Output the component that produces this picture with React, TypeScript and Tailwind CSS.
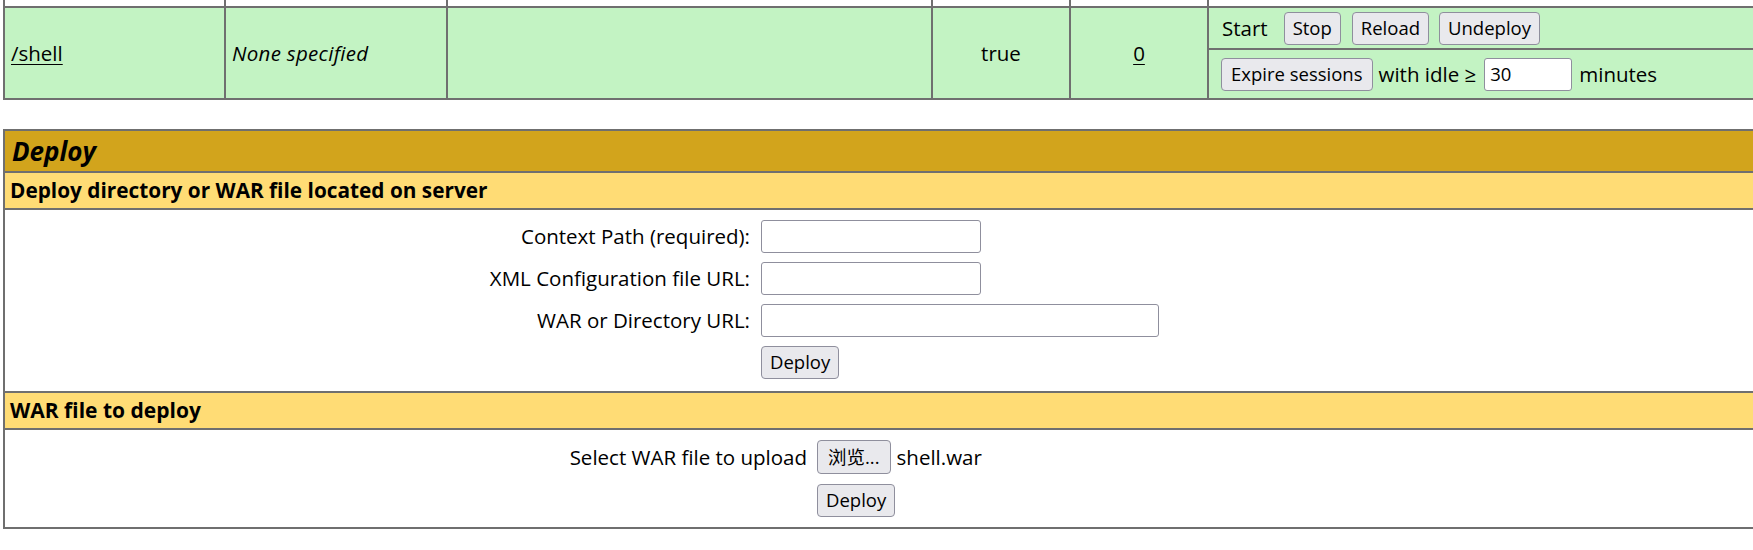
import React from "react";

const FONT = "font-['Open_Sans','Noto_Sans_CJK_SC',sans-serif]";
const cellB = "border-2 border-[#6f6f6f]";

function Btn({ children, className = "" }: { children: React.ReactNode; className?: string }) {
  return (
    <button
      type="button"
      className={`h-[33px] px-[8px] text-[18.5px] leading-none rounded-[4px] border border-[#8f8f9d] bg-[#e9e9ed] text-black ${className}`}
    >
      {children}
    </button>
  );
}

function Field({ w }: { w: string }) {
  return <div className={`h-[33px] ${w} rounded-[3px] border border-[#8f8f9d] bg-white`} />;
}

export default function App() {
  return (
    <div className={`w-[1753px] h-[550px] overflow-hidden bg-white text-black text-[20.5px] ${FONT}`}>
      <table className="ml-[3px] w-[1800px] table-fixed border-collapse">
        <colgroup>
          <col className="w-[221px]" />
          <col className="w-[222px]" />
          <col className="w-[485px]" />
          <col className="w-[138px]" />
          <col className="w-[138px]" />
          <col />
        </colgroup>
        <tbody>
          <tr className="h-[7px]">
            <td className={`${cellB} border-t-0 p-0`} />
            <td className={`${cellB} border-t-0 p-0`} />
            <td className={`${cellB} border-t-0 p-0`} />
            <td className={`${cellB} border-t-0 p-0`} />
            <td className={`${cellB} border-t-0 p-0`} />
            <td className={`${cellB} border-t-0 p-0`} />
          </tr>
          <tr className="bg-[#c3f3c3]">
            <td rowSpan={2} className={`${cellB} px-[6px] align-middle`}>
              <a className="underline underline-offset-[3px] decoration-1">/shell</a>
            </td>
            <td rowSpan={2} className={`${cellB} px-[6px] align-middle italic tracking-[0.3px]`}>
              None specified
            </td>
            <td rowSpan={2} className={`${cellB} align-middle`} />
            <td rowSpan={2} className={`${cellB} align-middle text-center`}>
              true
            </td>
            <td rowSpan={2} className={`${cellB} align-middle text-center`}>
              <a className="underline underline-offset-[3px] decoration-1">0</a>
            </td>
            <td className={`${cellB} h-[42px] p-0 align-middle`}>
              <div className="flex items-center pl-[13px]">
                <span>Start</span>
                <Btn className="ml-[16px]">Stop</Btn>
                <Btn className="ml-[11px]">Reload</Btn>
                <Btn className="ml-[10px]">Undeploy</Btn>
              </div>
            </td>
          </tr>
          <tr className="bg-[#c3f3c3]">
            <td className={`${cellB} h-[50px] p-0 align-middle`}>
              <div className="flex items-center pl-[12px]">
                <Btn className="px-[9px]">Expire sessions</Btn>
                <span className="ml-[6px]">with idle ≥</span>
                <div className="ml-[8px] h-[33px] w-[88px] rounded-[3px] border border-[#8f8f9d] bg-white px-[5px] flex items-center text-[18.5px]">
                  30
                </div>
                <span className="ml-[7px]">minutes</span>
              </div>
            </td>
          </tr>
        </tbody>
      </table>

      <div className="mt-[29px] ml-[3px] w-[1800px] border-2 border-[#6f6f6f] flex flex-col">
        <div className="h-[40px] bg-[#d2a41c] flex items-center pl-[7px] text-[26px] font-bold italic">
          Deploy
        </div>
        <div className="h-[37px] border-t-2 border-[#6f6f6f] bg-[#ffdc75] flex items-center pl-[5px] font-bold text-[20.8px]">
          Deploy directory or WAR file located on server
        </div>
        <div className="border-t-2 border-[#6f6f6f] pt-[10px] pb-[12px]">
          <div className="ml-[475px] grid grid-cols-[270px_auto] gap-x-[11px] gap-y-[9px] items-center">
            <div className="text-right">Context Path (required):</div>
            <Field w="w-[220px]" />
            <div className="text-right">XML Configuration file URL:</div>
            <Field w="w-[220px]" />
            <div className="text-right">WAR or Directory URL:</div>
            <Field w="w-[398px]" />
            <div />
            <div>
              <Btn className="h-[32px]">Deploy</Btn>
            </div>
          </div>
        </div>
        <div className="h-[37px] border-t-2 border-[#6f6f6f] bg-[#ffdc75] flex items-center pl-[5px] font-bold text-[21px]">
          WAR file to deploy
        </div>
        <div className="border-t-2 border-[#6f6f6f] pt-[10px] pb-[10px]">
          <div className="ml-[542px] grid grid-cols-[260px_auto] gap-x-[10px] gap-y-[10px] items-center">
            <div className="text-right">Select WAR file to upload</div>
            <div className="flex items-center">
              <Btn className="h-[34px] px-[10px]">浏览...</Btn>
              <span className="ml-[6px]">shell.war</span>
            </div>
            <div />
            <div>
              <Btn>Deploy</Btn>
            </div>
          </div>
        </div>
      </div>
    </div>
  );
}
